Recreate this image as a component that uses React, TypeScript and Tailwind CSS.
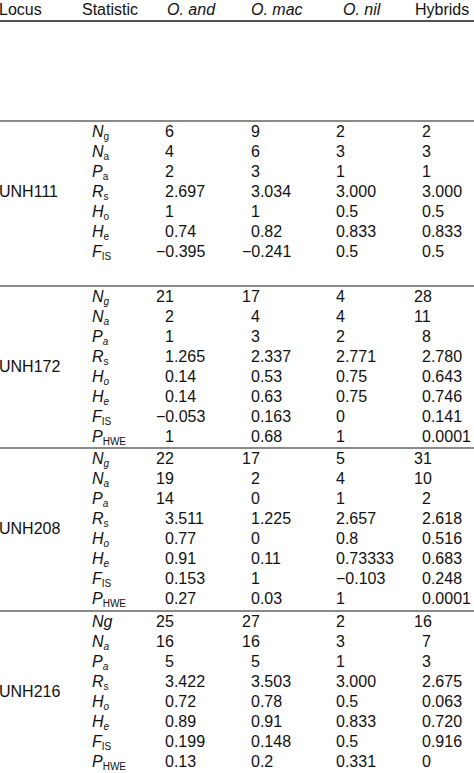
type Stat = {
  sym: string
  sub?: string
  // subscript set in italic (UNH172 onward)
  subItalic?: boolean
  // whole symbol in one line, no subscript (e.g. "Ng" in UNH216)
  plain?: string
}

type Section = {
  locus: string
  stats: Stat[]
  values: string[][] // [and, mac, nil, hyb] per column
  padBottom?: string
}

const upright: Stat[] = [
  { sym: 'N', sub: 'g' },
  { sym: 'N', sub: 'a' },
  { sym: 'P', sub: 'a' },
  { sym: 'R', sub: 's' },
  { sym: 'H', sub: 'o' },
  { sym: 'H', sub: 'e' },
  { sym: 'F', sub: 'IS' },
]

const italicSubs = (first: Stat): Stat[] => [
  first,
  { sym: 'N', sub: 'a', subItalic: true },
  { sym: 'P', sub: 'a', subItalic: true },
  { sym: 'R', sub: 's' },
  { sym: 'H', sub: 'o', subItalic: true },
  { sym: 'H', sub: 'e', subItalic: true },
  { sym: 'F', sub: 'IS' },
  { sym: 'P', sub: 'HWE' },
]

const sections: Section[] = [
  {
    locus: 'UNH111',
    stats: upright,
    values: [
      ['6', '4', '2', '2.697', '1', '0.74', '−0.395'],
      ['9', '6', '3', '3.034', '1', '0.82', '−0.241'],
      ['2', '3', '1', '3.000', '0.5', '0.833', '0.5'],
      ['2', '3', '1', '3.000', '0.5', '0.833', '0.5'],
    ],
    padBottom: 'pb-[23px]',
  },
  {
    locus: 'UNH172',
    stats: italicSubs({ sym: 'N', sub: 'g', subItalic: true }),
    values: [
      ['21', '2', '1', '1.265', '0.14', '0.14', '−0.053', '1'],
      ['17', '4', '3', '2.337', '0.53', '0.63', '0.163', '0.68'],
      ['4', '4', '2', '2.771', '0.75', '0.75', '0', '1'],
      ['28', '11', '8', '2.780', '0.643', '0.746', '0.141', '0.0001'],
    ],
  },
  {
    locus: 'UNH208',
    stats: italicSubs({ sym: 'N', sub: 'g', subItalic: true }),
    values: [
      ['22', '19', '14', '3.511', '0.77', '0.91', '0.153', '0.27'],
      ['17', '2', '0', '1.225', '0', '0.11', '1', '0.03'],
      ['5', '4', '1', '2.657', '0.8', '0.73333', '−0.103', '1'],
      ['31', '10', '2', '2.618', '0.516', '0.683', '0.248', '0.0001'],
    ],
    padBottom: 'pb-[1px]',
  },
  {
    locus: 'UNH216',
    stats: italicSubs({ sym: '', plain: 'Ng' }),
    values: [
      ['25', '16', '5', '3.422', '0.72', '0.89', '0.199', '0.13'],
      ['27', '16', '5', '3.503', '0.78', '0.91', '0.148', '0.2'],
      ['2', '3', '1', '3.000', '0.5', '0.833', '0.5', '0.331'],
      ['16', '7', '3', '2.675', '0.063', '0.720', '0.916', '0'],
    ],
  },
]

/**
 * 一桁の値は桁を揃えるため少し右へずらす
 */
const isFlush = (v: string) => v.startsWith('−') || v.split('.')[0].length >= 2

function StatSymbol({ stat }: { stat: Stat }) {
  if (stat.plain) return <span className="italic">{stat.plain}</span>
  return (
    <span>
      <span className="italic">{stat.sym}</span>
      <sub className={`text-[10px] bottom-[-3px] ${stat.subItalic ? 'italic' : ''}`}>{stat.sub}</sub>
    </span>
  )
}

function ValueCell({ v, col }: { v: string; col: number }) {
  // O. nil の列は揃えない
  if (col === 2 || isFlush(v)) return <div>{v}</div>
  return <div className={col === 3 ? 'pl-[8px]' : 'pl-[9px]'}>{v}</div>
}

export default function App() {
  return (
    <div
      className="w-[474px] h-[773px] overflow-hidden bg-white text-[#111] text-[16px] leading-[20px]"
      style={{ fontFamily: '"Liberation Sans", Arial, sans-serif' }}
    >
      {/* header */}
      <div className="grid grid-cols-[82px_85px_84px_92px_72px_1fr] h-[22px] border-b-2 border-[#555]">
        <div className="-ml-[1px]">Locus</div>
        <div>Statistic</div>
        <div className="italic">O. and</div>
        <div className="italic">O. mac</div>
        <div className="italic">O. nil</div>
        <div>Hybrids</div>
      </div>
      <div className="h-[98px]" />

      {sections.map((s) => (
        <div key={s.locus} className={`border-t-2 border-[#8a8a8a] ${s.padBottom ?? ''}`}>
          <div className="flex">
            <div className="w-[93px] flex items-center -ml-[1px]">{s.locus}</div>
            <div className="flex flex-col">
              {s.stats.map((stat, i) => (
                <div key={i} className="h-[20px] grid grid-cols-[66px_86px_94px_78px_60px]">
                  <div className="pl-[2px]">
                    <StatSymbol stat={stat} />
                  </div>
                  {s.values.map((col, c) => (
                    <ValueCell key={c} v={col[i]} col={c} />
                  ))}
                </div>
              ))}
            </div>
          </div>
        </div>
      ))}
    </div>
  )
}
